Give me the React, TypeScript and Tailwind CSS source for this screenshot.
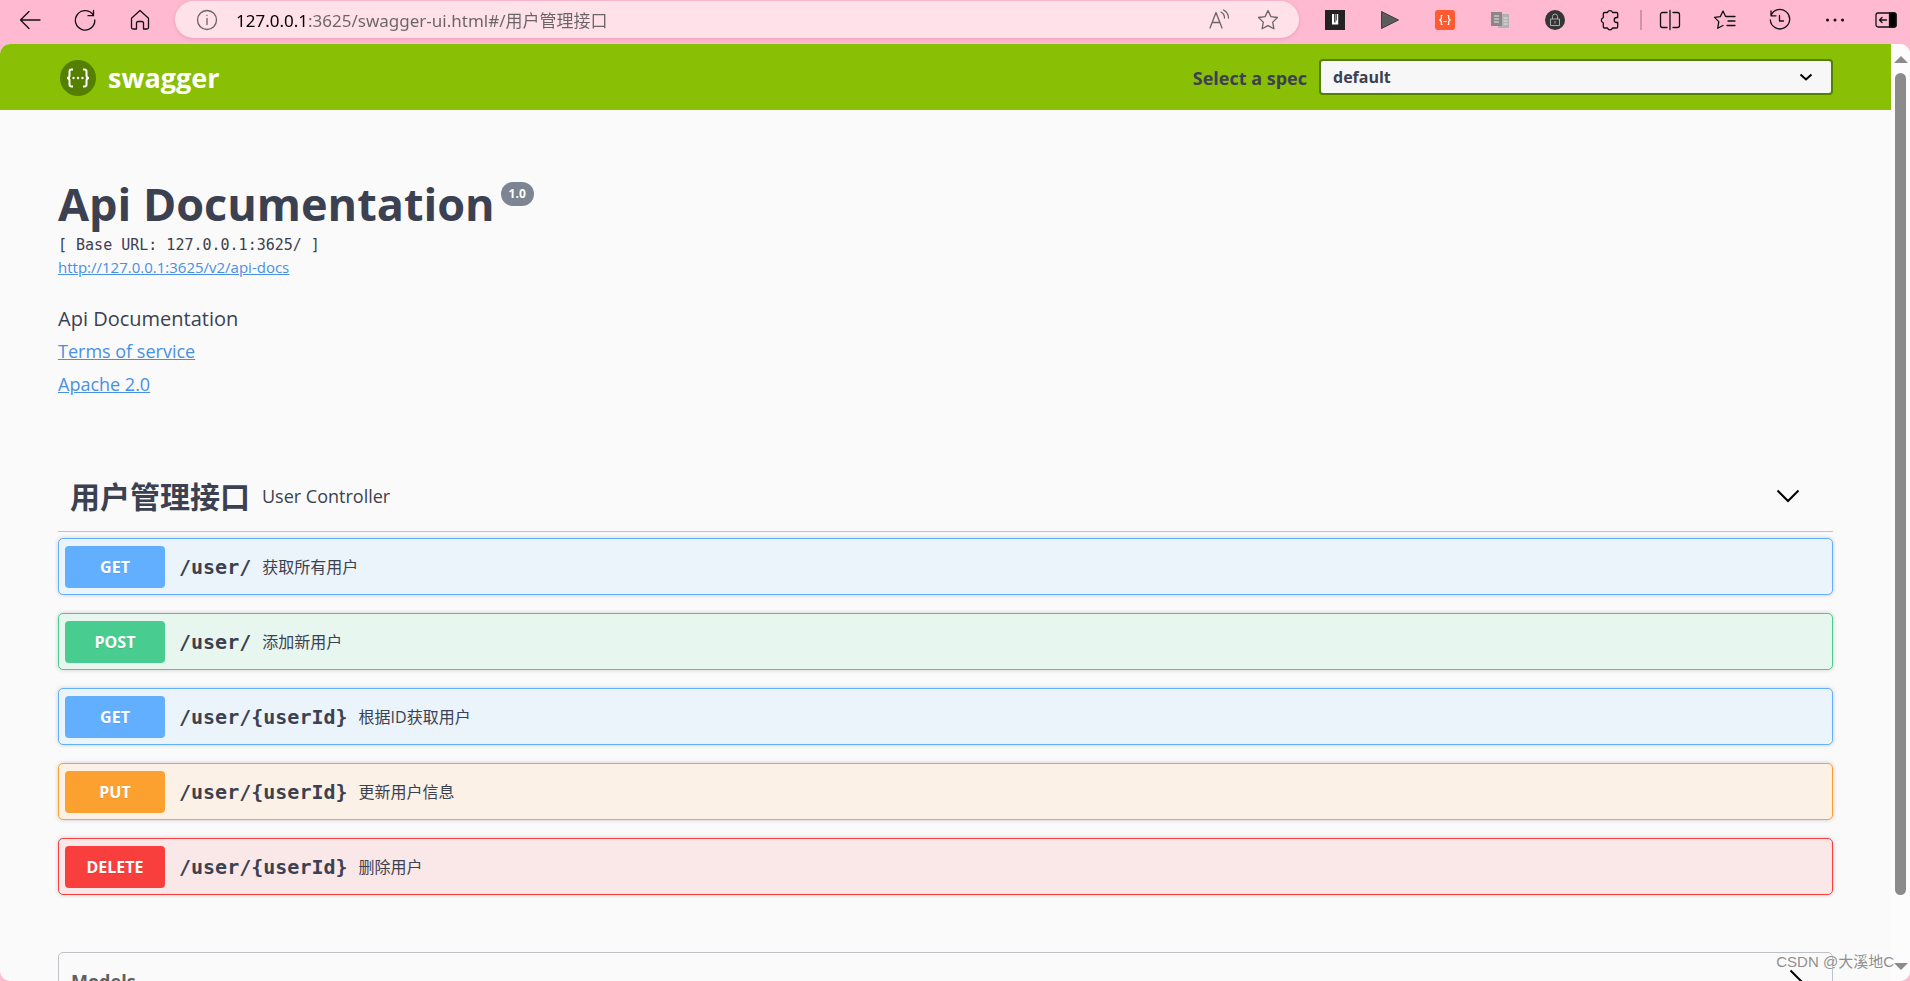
import React from "react";

type Operation = {
  method: string;
  path: string;
  summary: string;
  row: string;
  badge: string;
};

const operations: Operation[] = [
  { method: "GET", path: "/user/", summary: "获取所有用户", row: "border-[#61affe] bg-[#ebf3fb]", badge: "bg-[#61affe]" },
  { method: "POST", path: "/user/", summary: "添加新用户", row: "border-[#49cc90] bg-[#e8f6f0]", badge: "bg-[#49cc90]" },
  { method: "GET", path: "/user/{userId}", summary: "根据ID获取用户", row: "border-[#61affe] bg-[#ebf3fb]", badge: "bg-[#61affe]" },
  { method: "PUT", path: "/user/{userId}", summary: "更新用户信息", row: "border-[#fca130] bg-[#fbf1e6]", badge: "bg-[#fca130]" },
  { method: "DELETE", path: "/user/{userId}", summary: "删除用户", row: "border-[#f93e3e] bg-[#fae7e7]", badge: "bg-[#f93e3e]" },
];

function Icon({ children, className = "size-6" }: { children: React.ReactNode; className?: string }) {
  return (
    <svg viewBox="0 0 24 24" className={className} fill="none" stroke="currentColor" strokeWidth="1.3" strokeLinecap="round" strokeLinejoin="round" aria-hidden="true">
      {children}
    </svg>
  );
}

function ToolButton({ label, width = "w-[55px]", children }: { label: string; width?: string; children: React.ReactNode }) {
  return (
    <button type="button" aria-label={label} className={`flex shrink-0 items-center justify-center ${width}`}>
      {children}
    </button>
  );
}

function BrowserBar() {
  return (
    <header className="flex h-11 shrink-0 items-center pb-1.5 pt-px font-['Noto_Sans','Noto_Sans_CJK_SC',sans-serif] text-[#111]">
      <nav className="flex w-[175px] shrink-0 items-center pl-0.5" aria-label="Browser">
        <ToolButton label="Back">
          <Icon>
            <path d="M22 12H2.5M11 3.500 2.500 12l8.500 8.500" />
          </Icon>
        </ToolButton>
        <ToolButton label="Refresh">
          <Icon>
            <path d="M20.500 7.500A9.700 9.700 0 1 0 21.800 12M20.500 2.500v5.200h-5.500" />
          </Icon>
        </ToolButton>
        <ToolButton label="Home">
          <Icon>
            <path d="M3.500 10.200 12 2.500l8.500 7.700v9.300a1.500 1.500 0 0 1-1.500 1.500h-3.500v-6a1.500 1.500 0 0 0-1.500-1.500h-4a1.500 1.500 0 0 0-1.500 1.500v6H5a1.500 1.500 0 0 1-1.500-1.500z" />
          </Icon>
        </ToolButton>
      </nav>
      <div className="flex h-[37px] min-w-0 grow items-center rounded-full bg-[#ffe1ea] pl-5 pr-[19px] text-[#6a6367] shadow-[0_1px_4px_rgba(120,40,70,0.18)]">
        <Icon>
          <circle cx="12" cy="12" r="9.500" />
          <path d="M12 10.500v6M12 7.400v.2" />
        </Icon>
        <input
          type="text"
          aria-label="Address"
          defaultValue="127.0.0.1:3625/swagger-ui.html#/用户管理接口"
          className="ml-[17px] h-8 min-w-0 grow bg-[linear-gradient(to_right,#000_71px,#6a6367_71px)] bg-clip-text text-[17px] leading-6 text-transparent outline-none"
        />
        <button type="button" aria-label="Read aloud" className="w-[49px]">
          <Icon>
            <path d="M3 20 9 4.500 15 20M5.200 14.500h7.600M14 4c2 1 3.500 3.300 3.500 6M16.500 2c3 1.600 5 4.500 5 8" />
          </Icon>
        </button>
        <button type="button" aria-label="Favorite">
          <Icon>
            <path d="m12 2.500 2.900 6.100 6.600.9-4.800 4.600 1.200 6.700L12 17.600l-5.900 3.200 1.200-6.700-4.800-4.600 6.600-.9z" />
          </Icon>
        </button>
      </div>
      <div className="flex shrink-0 items-center pl-2">
        <ToolButton label="Extension L">
          <svg viewBox="0 0 20 20" className="size-5" aria-hidden="true">
            <path fill="#222" d="M0 0h20v20H0z" />
            <path fill="#fff" d="M7 4h2.200v8.500h1.300V4h.8v6.500h.7V4h1.200v10.500H7z" />
          </svg>
        </ToolButton>
        <ToolButton label="Play">
          <svg viewBox="0 0 20 20" className="size-5" aria-hidden="true">
            <path fill="#5c5c5c" stroke="#3f3f3f" d="m1.500 1.500 17 8.500-17 8.500z" />
          </svg>
        </ToolButton>
        <ToolButton label="JSON viewer">
          <svg viewBox="0 0 20 20" className="size-5" aria-hidden="true">
            <rect width="20" height="20" rx="3" fill="#ff5a30" />
            <path fill="none" stroke="#fff" strokeWidth="1.200" d="M7.500 5.500H6.300v3.300L4.800 10l1.500 1.200v3.300h1.200M12.500 5.500h1.200v3.300l1.500 1.200-1.500 1.200v3.300h-1.200M8.300 11.500h3.400" />
          </svg>
        </ToolButton>
        <ToolButton label="Translate">
          <svg viewBox="0 0 20 20" className="size-5" aria-hidden="true">
            <path fill="#b4b0b2" d="M8 4h11v14H8z" />
            <path fill="#8a8789" d="M1 2h11v14H1z" />
            <path stroke="#e9e6e7" strokeWidth="1.200" d="M4 6h5M4 9h5M4 12h5M13.500 8h4M13.500 11h4M13.500 14h4" />
          </svg>
        </ToolButton>
        <ToolButton label="Password manager">
          <svg viewBox="0 0 20 20" className="size-5" fill="none" stroke="#aaa" aria-hidden="true">
            <circle cx="10" cy="10" r="10" fill="#353535" stroke="none" />
            <path d="M5.500 9h9v6.500h-9zM7.500 9V6.500a2.500 2.500 0 0 1 5 0V9M10 11v2.500" />
          </svg>
        </ToolButton>
        <ToolButton label="Extensions">
          <Icon>
            <path d="M6.500 4.500h3a2.600 2.600 0 0 1 5 0h4a1.200 1.200 0 0 1 1.200 1.200V9.500h-1a2.500 2.500 0 0 0 0 5h1v4.300a1.200 1.200 0 0 1-1.200 1.200h-4a2.600 2.600 0 0 1-5 0h-3a1.200 1.200 0 0 1-1.200-1.200V14.800a2.700 2.700 0 0 1 0-5.200V5.700A1.200 1.200 0 0 1 6.500 4.500z" />
          </Icon>
        </ToolButton>
        <span className="ml-[3px] h-5 w-0.5 shrink-0 bg-[#cf93a9]" />
        <ToolButton label="Split screen">
          <Icon>
            <path d="M9 4.500H4.500a2 2 0 0 0-2 2v11a2 2 0 0 0 2 2H9M15 4.500h4.500a2 2 0 0 1 2 2v11a2 2 0 0 1-2 2H15M12 2.500v19" />
          </Icon>
        </ToolButton>
        <ToolButton label="Favorites">
          <Icon>
            <path d="M14 8.500h8M15 13h7M14 17.500h8M13.500 8.500 12.500 8.300 10 3 7.300 8.600l-5.800.8 4.300 4.200-1.100 6.700 5.300-2.800" />
          </Icon>
        </ToolButton>
        <ToolButton label="History">
          <Icon>
            <path d="M3 7.500A9.700 9.700 0 1 1 2.300 12M3 2.800v5h5M11.500 7.500v5.500h4" />
          </Icon>
        </ToolButton>
        <ToolButton label="More">
          <Icon>
            <path strokeWidth="3" d="M4.500 12h.01M12 12h.01M19.500 12h.01" />
          </Icon>
        </ToolButton>
        <ToolButton label="Sidebar" width="w-12">
          <Icon>
            <rect x="2" y="5" width="20" height="14" rx="2" />
            <path fill="#000" d="M15.500 5H20a2 2 0 0 1 2 2v10a2 2 0 0 1-2 2h-4.500z" />
            <path d="M12.500 12h-7M8 9.500 5.500 12 8 14.500" />
          </Icon>
        </ToolButton>
      </div>
    </header>
  );
}

function Topbar() {
  return (
    <div className="flex h-[66px] items-center justify-between bg-[#89bf04] pl-[60px] pr-[58px]">
      <a href="#top" className="flex items-center gap-3 pt-0.5 text-white">
        <svg viewBox="0 0 36 36" className="size-9" fill="none" stroke="#fff" strokeWidth="2" aria-hidden="true">
          <circle cx="18" cy="18" r="18" fill="#547f00" stroke="none" />
          <path d="M13 9.500h-1.500q-2 0-2 2v4q0 2.500-2.500 2.500 2.500 0 2.500 2.500v4q0 2 2 2H13M23 9.500h1.500q2 0 2 2v4q0 2.500 2.500 2.500-2.500 0-2.500 2.500v4q0 2-2 2H23" />
          <path strokeLinecap="round" strokeWidth="2.400" d="M13.500 18h.01M18 18h.01M22.500 18h.01" />
        </svg>
        <span className="text-[27px] font-bold leading-9">swagger</span>
      </a>
      <div className="flex items-center gap-3">
        <label htmlFor="spec" className="pt-0.5 text-[18px] font-bold">Select a spec</label>
        <div className="grid w-[514px] items-center">
          <select id="spec" className="col-start-1 row-start-1 h-9 w-full appearance-none rounded border-2 border-[#547f00] bg-[#f7f7f7] px-3 text-base font-bold leading-6">
            <option>default</option>
          </select>
          <svg viewBox="0 0 14 14" className="pointer-events-none col-start-1 row-start-1 mr-5 size-3.5 justify-self-end" fill="none" stroke="#000" strokeWidth="2" aria-hidden="true">
            <path d="m1.500 4.500 5.500 5 5.500-5" />
          </svg>
        </div>
      </div>
    </div>
  );
}

function OperationRow({ op }: { op: Operation }) {
  return (
    <button type="button" className={`flex h-[57px] w-full items-center rounded-[5px] border px-1.5 text-left shadow-[0_0_4px_rgba(0,0,0,0.19)] ${op.row}`}>
      <span className={`flex h-[42px] w-[100px] items-center justify-center rounded text-base font-bold text-white [text-shadow:0_1px_0_rgba(0,0,0,0.1)] ${op.badge}`}>{op.method}</span>
      <span className="pl-3.5 pr-[11px] font-['DejaVu_Sans_Mono',monospace] text-[20px] font-bold">{op.path}</span>
      <span className="text-base">{op.summary}</span>
    </button>
  );
}

function Scrollbar() {
  return (
    <div className="flex w-[19px] shrink-0 flex-col items-center bg-[#fcfcfc] pt-3" aria-hidden="true">
      <span className="border-x-[7px] border-b-[7px] border-x-transparent border-b-[#8b8b8b]" />
      <span className="mt-2.5 w-[11px] grow rounded-full bg-[#8b8b8b]" />
      <span className="mb-[11px] mt-[68px] border-x-[7px] border-t-[7px] border-x-transparent border-t-[#8b8b8b]" />
    </div>
  );
}

export default function App() {
  return (
    <div className="relative flex h-screen flex-col overflow-hidden bg-[#ffbad2] font-['Open_Sans','Noto_Sans_CJK_SC',sans-serif] text-[#3b4151]">
      <BrowserBar />
      <div className="flex min-h-0 grow overflow-hidden rounded-[10px] bg-[#fafafa]">
        <main id="top" className="min-w-0 grow overflow-hidden">
          <Topbar />
          <div className="px-[58px]">
            <section className="pt-[63px]">
              <div className="flex items-start gap-1.5">
                <h1 className="text-[45px] font-bold leading-[62px]">Api Documentation</h1>
                <span className="mt-[9px] rounded-full bg-[#7d8492] px-2 text-xs font-bold leading-6 text-white">1.0</span>
              </div>
              <p className="font-['DejaVu_Sans_Mono',monospace] text-[15px] leading-5">[ Base URL: 127.0.0.1:3625/ ]</p>
              <a href="#docs" className="block w-fit text-[15px] leading-6 text-[#4990e2] underline">http://127.0.0.1:3625/v2/api-docs</a>
              <p className="mt-6 text-[20px] leading-8">Api Documentation</p>
              <a href="#terms" className="block w-fit text-[18px] leading-[33px] text-[#4990e2] underline">Terms of service</a>
              <a href="#license" className="block w-fit text-[18px] leading-[33px] text-[#4990e2] underline">Apache 2.0</a>
            </section>
            <section className="pt-[60px]">
              <button type="button" className="flex h-[71px] w-full items-center border-b border-[#bfc1c6] pl-3 pr-[33px] text-left">
                <h2 className="text-[30px] font-bold">用户管理接口</h2>
                <span className="grow pl-3 text-[18px]">User Controller</span>
                <svg viewBox="0 0 24 14" className="h-3.5 w-6" fill="none" stroke="#000" strokeWidth="2" aria-hidden="true">
                  <path d="M1.500 1.500 12 12 22.500 1.500" />
                </svg>
              </button>
              <div className="flex flex-col gap-[18px] pt-1.5">
                {operations.map((op) => (
                  <OperationRow key={op.method + op.path} op={op} />
                ))}
              </div>
            </section>
            <section className="mt-[57px] h-20 rounded-[5px] border border-[#bfc1c6]">
              <button type="button" className="flex w-full items-start justify-between pl-3 pr-[29px] pt-4">
                <span className="text-[18px] font-bold leading-6 text-[#606060]">Models</span>
                <svg viewBox="0 0 14 24" className="h-6 w-3.5" fill="none" stroke="#000" strokeWidth="2" aria-hidden="true">
                  <path d="M1.500 1.500 12 12 1.500 22.500" />
                </svg>
              </button>
            </section>
          </div>
        </main>
        <Scrollbar />
      </div>
      <span className="absolute bottom-2 right-4 font-['Liberation_Sans','Noto_Sans_CJK_SC',sans-serif] text-[15px] text-[#8f8f8f] [text-shadow:0_0_1px_#fff]">CSDN @大溪地C</span>
    </div>
  );
}
